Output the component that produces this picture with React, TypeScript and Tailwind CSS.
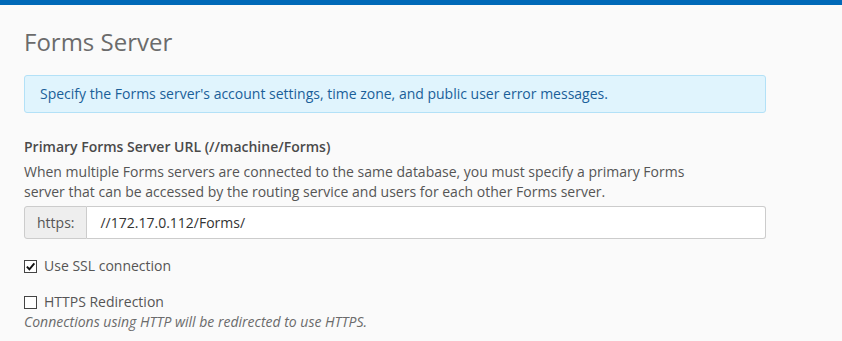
import { useState } from 'react';

function Check({ checked, onToggle, label }: { checked: boolean; onToggle: () => void; label: string }) {
  return (
    <label className="flex items-center gap-[7px] leading-[20px] text-[14px] text-[#555] cursor-pointer select-none" onClick={onToggle}>
      <span className="w-[13px] h-[13px] border border-[#444] bg-white flex items-center justify-center mt-[1px]">
        {checked && (
          <svg viewBox="0 0 12 12" className="w-[11px] h-[11px]">
            <path d="M2 6.2 L4.8 9 L10.2 2.6" fill="none" stroke="#111" strokeWidth="2.1" />
          </svg>
        )}
      </span>
      {label}
    </label>
  );
}

export default function App() {
  const [url, setUrl] = useState('//172.17.0.112/Forms/');
  const [ssl, setSsl] = useState(true);
  const [redirect, setRedirect] = useState(false);

  return (
    <div className="min-h-[341px] bg-[#fafafa] border-t-[5px] border-[#0069b8]" style={{ fontFamily: '"Open Sans", "Liberation Sans", sans-serif' }}>
      <div className="pl-[24px] pt-[21px] w-[766px]">
        <h1 className="text-[24px] leading-[32px] text-[#6b6b6b]">Forms Server</h1>

        <div className="mt-[17px] border border-[#b3e1f7] bg-[#e0f4fd] rounded-[3px] px-[15px] py-[8px] text-[14px] leading-[20px] text-[#1a5f99]">
          Specify the Forms server's account settings, time zone, and public user error messages.
        </div>

        <div className="mt-[24px] text-[14px] leading-[20px] font-semibold text-[#4a4a4a]">
          Primary Forms Server URL (//machine/Forms)
        </div>
        <p className="mt-[5px] max-w-[690px] text-[14px] leading-[20px] text-[#555]">
          When multiple Forms servers are connected to the same database, you must specify a primary Forms server that can be accessed by the routing service and users for each other Forms server.
        </p>

        <div className="mt-[4px] flex h-[33px] text-[14px]">
          <span className="flex items-center px-[12px] bg-[#eee] border border-[#ccc] rounded-l-[3px] text-[#555]">https:</span>
          <input
            value={url}
            onChange={e => setUrl(e.target.value)}
            className="flex-1 border border-l-0 border-[#ccc] rounded-r-[3px] bg-white px-[13px] text-[#333] outline-none"
          />
        </div>

        <div className="mt-[17px]">
          <Check checked={ssl} onToggle={() => setSsl(!ssl)} label="Use SSL connection" />
        </div>
        <div className="mt-[16px]">
          <Check checked={redirect} onToggle={() => setRedirect(!redirect)} label="HTTPS Redirection" />
        </div>
        <div className="text-[14px] leading-[20px] italic text-[#6b6b6b]">
          Connections using HTTP will be redirected to use HTTPS.
        </div>
      </div>
    </div>
  );
}
